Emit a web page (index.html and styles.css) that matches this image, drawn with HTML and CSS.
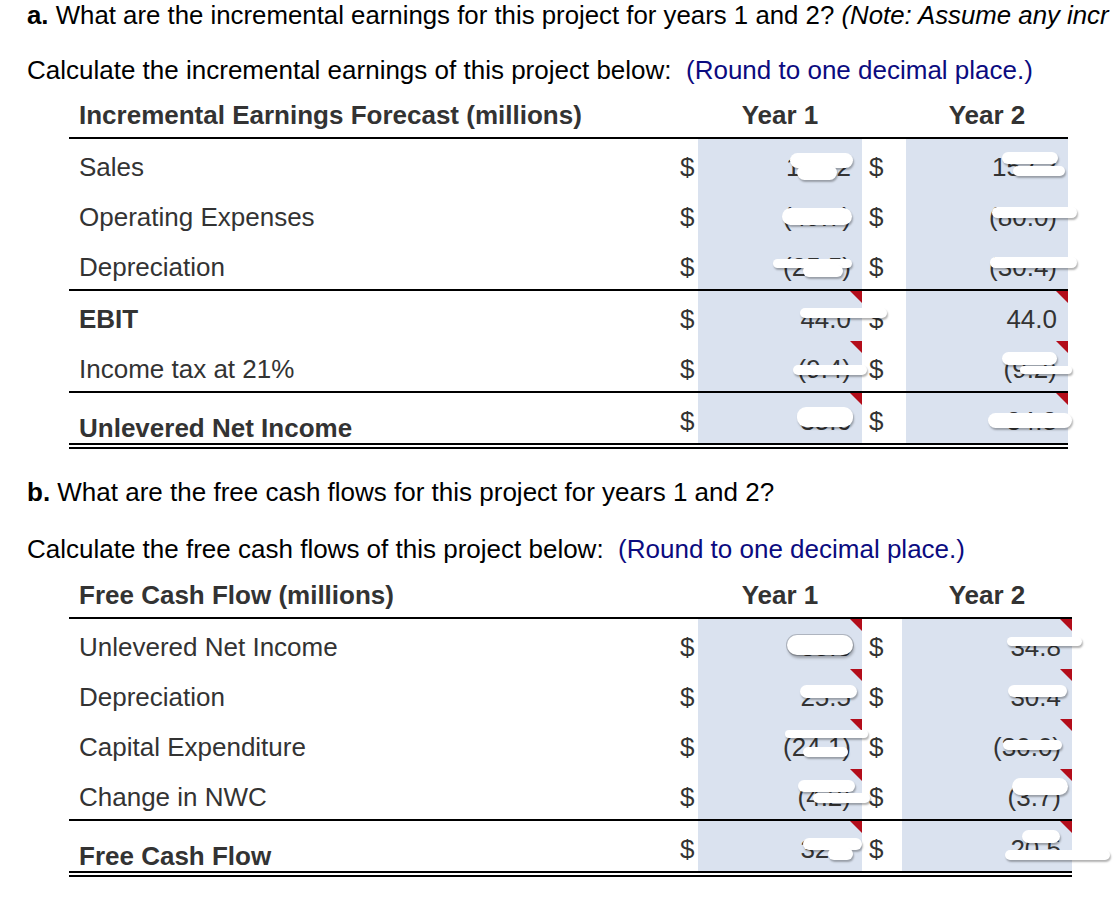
FILE: index.html
```html
<!DOCTYPE html>
<html>
<head>
<meta charset="utf-8">
<link rel="stylesheet" href="styles.css">
</head>
<body>
<main class="page">
  <p class="q q-first"><b>a.</b> What are the incremental earnings for this project for years 1 and 2? <i>(Note: Assume any incr</i></p>
  <p class="q q-calc">Calculate the incremental earnings of this project below:&nbsp; <span class="hint">(Round to one decimal place.)</span></p>

  <div class="sheet sheet-a">
    <div class="row head"><span class="cell label">Incremental Earnings Forecast (millions)</span><span class="cell"></span><span class="cell yr">Year 1</span><span class="cell"></span><span class="cell yr">Year 2</span></div>
    <div class="row"><span class="cell label">Sales</span><span class="cell cur">$</span><span class="cell val">120.2</span><span class="cell cur cur2">$</span><span class="cell val">152.3</span></div>
    <div class="row"><span class="cell label">Operating Expenses</span><span class="cell cur">$</span><span class="cell val">(49.7)</span><span class="cell cur cur2">$</span><span class="cell val">(80.0)</span></div>
    <div class="row"><span class="cell label">Depreciation</span><span class="cell cur">$</span><span class="cell val">(25.5)</span><span class="cell cur cur2">$</span><span class="cell val">(30.4)</span></div>
    <div class="row rule"><span class="cell label strong">EBIT</span><span class="cell cur">$</span><span class="cell val flag">44.0</span><span class="cell cur cur2">$</span><span class="cell val flag">44.0</span></div>
    <div class="row"><span class="cell label">Income tax at 21%</span><span class="cell cur">$</span><span class="cell val flag">(9.4)</span><span class="cell cur cur2">$</span><span class="cell val flag">(9.2)</span></div>
    <div class="row rule total"><span class="cell label strong low">Unlevered Net Income</span><span class="cell cur">$</span><span class="cell val flag">35.6</span><span class="cell cur cur2">$</span><span class="cell val flag">34.8</span></div>
  </div>

  <p class="q q-b"><b>b.</b> What are the free cash flows for this project for years 1 and 2?</p>
  <p class="q q-calc2">Calculate the free cash flows of this project below:&nbsp; <span class="hint">(Round to one decimal place.)</span></p>

  <div class="sheet sheet-b">
    <div class="row head"><span class="cell label">Free Cash Flow (millions)</span><span class="cell"></span><span class="cell yr">Year 1</span><span class="cell"></span><span class="cell yr">Year 2</span></div>
    <div class="row"><span class="cell label">Unlevered Net Income</span><span class="cell cur">$</span><span class="cell val flag">35.6</span><span class="cell cur cur2">$</span><span class="cell val flag">34.8</span></div>
    <div class="row"><span class="cell label">Depreciation</span><span class="cell cur">$</span><span class="cell val flag">25.5</span><span class="cell cur cur2">$</span><span class="cell val flag">30.4</span></div>
    <div class="row"><span class="cell label">Capital Expenditure</span><span class="cell cur">$</span><span class="cell val flag">(24.1)</span><span class="cell cur cur2">$</span><span class="cell val flag">(30.0)</span></div>
    <div class="row"><span class="cell label">Change in NWC</span><span class="cell cur">$</span><span class="cell val flag">(4.2)</span><span class="cell cur cur2">$</span><span class="cell val flag">(3.7)</span></div>
    <div class="row rule total"><span class="cell label strong low">Free Cash Flow</span><span class="cell cur">$</span><span class="cell val flag">32.8</span><span class="cell cur cur2">$</span><span class="cell val flag">20.5</span></div>
  </div>

  <div class="blob b01"></div><div class="blob b02"></div>
  <div class="blob b03"></div><div class="blob b04"></div>
  <div class="blob b05"></div>
  <div class="blob b06"></div>
  <div class="blob b07"></div><div class="blob b08"></div>
  <div class="blob b09"></div>
  <div class="blob b10"></div>
  <div class="blob b11"></div>
  <div class="blob b12"></div><div class="blob b13"></div>
  <div class="blob b14"></div>
  <div class="blob b15"></div>
  <div class="blob b16 ring"></div>
  <div class="blob b17"></div>
  <div class="blob b18"></div>
  <div class="blob b19"></div>
  <div class="blob b20"></div><div class="blob b21"></div>
  <div class="blob b22"></div>
  <div class="blob b23"></div><div class="blob b24"></div>
  <div class="blob b25"></div>
  <div class="blob b26"></div><div class="blob b27"></div>
  <div class="blob b28"></div><div class="blob b29"></div>
</main>
</body>
</html>
```

FILE: styles.css
```css
html, body {
  margin: 0;
  padding: 0;
  background: #ffffff;
}

body {
  font-family: "Liberation Sans", Arial, Helvetica, sans-serif;
  font-size: 26px;
  color: #000000;
  overflow: hidden;
}

.page {
  position: relative;
  width: 1118px;
  height: 904px;
  padding-left: 27px;
  box-sizing: border-box;
}

.q {
  margin: 0;
  line-height: 30px;
  white-space: nowrap;
}

.q-first {
  font-size: 25.8px;
}

.q-calc {
  margin-top: 25px;
}

.q-b {
  margin-top: 28px;
}

.q-calc2 {
  margin-top: 27px;
}

.hint {
  color: #0b0b80;
}

.sheet {
  margin-left: 42px;
  color: #333333;
}

.sheet-a {
  width: 999px;
  margin-top: 8px;
}

.sheet-b {
  width: 1003px;
  margin-top: 9px;
}

.row {
  display: grid;
  height: 50px;
}

.sheet-a .row {
  grid-template-columns: 601px 28px 164px 44px 162px;
}

.sheet-b .row {
  grid-template-columns: 601px 28px 164px 40px 170px;
}

.row.head {
  height: 44px;
  border-bottom: 2px solid #000000;
}

.row.rule {
  border-top: 2px solid #000000;
}

.row.total {
  border-bottom: 6px double #000000;
}

.cell {
  display: flex;
  align-items: center;
  box-sizing: border-box;
  padding-top: 6px;
  line-height: 30px;
  white-space: nowrap;
}

.head .cell {
  padding-top: 0;
  font-weight: bold;
}

.label {
  padding-left: 10px;
}

.strong {
  font-weight: bold;
}

.label.low {
  align-items: flex-end;
  padding-top: 0;
}

.yr {
  justify-content: center;
}

.cur {
  padding-left: 10px;
}

.cur.cur2 {
  padding-left: 7px;
}

.val {
  position: relative;
  justify-content: flex-end;
  padding-right: 11px;
  background: #dae2ef;
}

.val.flag::after {
  content: "";
  position: absolute;
  top: 0;
  right: 0;
  width: 12px;
  height: 12px;
  background: #b30d1a;
  clip-path: polygon(0 0, 100% 0, 100% 100%);
}

/* white scribbles over the answers */
.blob {
  position: absolute;
  background: #ffffff;
  border-radius: 9px;
  box-shadow: 1px 2px 2px rgba(0, 0, 0, 0.3);
}

.blob.ring {
  border-radius: 12px;
  box-shadow: 0 0 0 1px rgba(0, 0, 0, 0.2), 1px 3px 3px rgba(0, 0, 0, 0.3);
}

.b01 { left: 790px; top: 153px; width: 63px; height: 15px; }
.b02 { left: 797px; top: 165px; width: 40px; height: 15px; }
.b03 { left: 1002px; top: 152px; width: 56px; height: 12px; }
.b04 { left: 1013px; top: 166px; width: 52px; height: 10px; }
.b05 { left: 782px; top: 208px; width: 70px; height: 17px; }
.b06 { left: 992px; top: 207px; width: 85px; height: 11px; }
.b07 { left: 773px; top: 259px; width: 79px; height: 9px; }
.b08 { left: 803px; top: 265px; width: 40px; height: 12px; }
.b09 { left: 990px; top: 257px; width: 87px; height: 11px; }
.b10 { left: 800px; top: 308px; width: 87px; height: 10px; }
.b11 { left: 793px; top: 365px; width: 74px; height: 10px; }
.b12 { left: 1002px; top: 352px; width: 55px; height: 13px; }
.b13 { left: 1020px; top: 366px; width: 52px; height: 8px; }
.b14 { left: 797px; top: 407px; width: 56px; height: 20px; }
.b15 { left: 988px; top: 413px; width: 84px; height: 15px; }
.b16 { left: 787px; top: 635px; width: 66px; height: 20px; }
.b17 { left: 1007px; top: 637px; width: 75px; height: 9px; }
.b18 { left: 800px; top: 685px; width: 57px; height: 13px; }
.b19 { left: 1008px; top: 685px; width: 59px; height: 12px; }
.b20 { left: 785px; top: 730px; width: 83px; height: 8px; }
.b21 { left: 803px; top: 747px; width: 45px; height: 10px; }
.b22 { left: 1003px; top: 740px; width: 59px; height: 10px; }
.b23 { left: 798px; top: 780px; width: 57px; height: 12px; }
.b24 { left: 813px; top: 793px; width: 57px; height: 10px; }
.b25 { left: 1012px; top: 778px; width: 56px; height: 17px; }
.b26 { left: 803px; top: 838px; width: 59px; height: 12px; }
.b27 { left: 828px; top: 848px; width: 25px; height: 12px; }
.b28 { left: 1022px; top: 830px; width: 38px; height: 13px; }
.b29 { left: 1005px; top: 850px; width: 105px; height: 10px; }
```
